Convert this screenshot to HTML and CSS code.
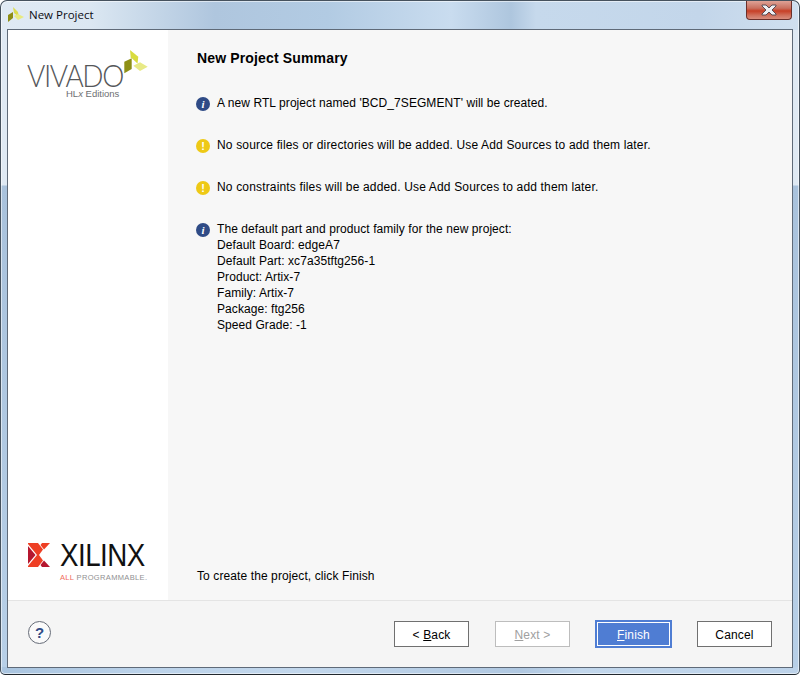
FILE: index.html
```html
<!DOCTYPE html>
<html>

<head>
    <title>New Project</title>
    <link rel="stylesheet" href="styles.css">
</head>

<body>
    <div class="window">
        <div class="titlebar">
            <svg class="title-icon" width="16" height="16" viewBox="0 0 16 16">
                <polygon points="5,0 10,5 11,10 6,6" fill="#dcdc50" />
                <polygon points="0,8 5,5 5,11 0,15" fill="#8e8e14" />
                <polygon points="6,9 10,7 16,10 10,13" fill="#e8ea80" />
            </svg>
            <span class="title-text">New Project</span>
            <div class="close-button">
                <svg width="16" height="12" viewBox="0 0 16 12">
                    <path d="M1 1h4l3 3 3-3h4v1l-4 4 4 4v1h-4l-3-3-3 3H1v-1l4-4-4-4z" fill="#eef0f4" stroke="#5a4a52" stroke-width="1" />
                </svg>
            </div>
        </div>
        <div class="client">
            <div class="main">
                <div class="sidebar">
                    <div class="vivado-logo">
                        <span class="vivado-name">VIVADO</span>
                        <svg class="vivado-mark" width="24" height="24" viewBox="0 0 24 24">
                            <polygon points="6,0 14.3,6.7 13.5,13.5 6.7,7.3" fill="#d9dc3e" />
                            <polygon points="0.3,11.7 7.7,8.3 7.7,19 0.3,23.3" fill="#8e9016" />
                            <polygon points="9.3,15.7 16,12.3 23.7,16.7 16,21" fill="#e8ea86" />
                        </svg>
                        <span class="vivado-sub">HL<i>x</i> Editions</span>
                    </div>
                    <div class="xilinx-logo">
                        <svg class="xilinx-mark" width="22" height="24" viewBox="0 0 22 24">
                            <polygon points="0,0 10,0 15,6.5 11,12 9,12 0,1" fill="#ee3f24" />
                            <polygon points="0,3 7.5,12 0,21" fill="#b5172f" />
                            <polygon points="9,12 11,12 15,17.5 10,24 0,24 0,23" fill="#ee3f24" />
                            <polygon points="22,0 14,0 12.5,2 16,6.5" fill="#ee3f24" />
                            <polygon points="22,24 14,24 12.5,22 16,17.5" fill="#b5172f" />
                        </svg>
                        <div class="xilinx-text">
                            <span class="xilinx-name">XILINX</span>
                            <span class="xilinx-sub"><b>ALL</b> PROGRAMMABLE.</span>
                        </div>
                    </div>
                </div>
                <div class="content">
                    <h2>New Project Summary</h2>
                    <div class="message">
                        <span class="icon info">i</span>
                        <p class="spaced-s">A new RTL project named 'BCD_7SEGMENT' will be created.</p>
                    </div>
                    <div class="message">
                        <span class="icon warn">!</span>
                        <p class="spaced-l">No source files or directories will be added. Use Add Sources to add them later.</p>
                    </div>
                    <div class="message">
                        <span class="icon warn">!</span>
                        <p class="spaced-l">No constraints files will be added. Use Add Sources to add them later.</p>
                    </div>
                    <div class="message">
                        <span class="icon info">i</span>
                        <p class="spaced-s">The default part and product family for the new project:<br>
                            Default Board: edgeA7<br>
                            Default Part: xc7a35tftg256-1<br>
                            Product: Artix-7<br>
                            Family: Artix-7<br>
                            Package: ftg256<br>
                            Speed Grade: -1</p>
                    </div>
                    <p class="hint">To create the project, click Finish</p>
                </div>
            </div>
            <div class="footer">
                <span class="help">?</span>
                <div class="buttons">
                    <button><span>&lt; <u>B</u>ack</span></button>
                    <button disabled><span><u>N</u>ext &gt;</span></button>
                    <button class="primary"><span><u>F</u>inish</span></button>
                    <button><span>Cancel</span></button>
                </div>
            </div>
        </div>
    </div>
</body>

</html>
```

FILE: styles.css
```css
html, body {
    margin: 0;
    padding: 0;
    background-color: #ffffff;
}

body {
    width: 800px;
    height: 675px;
    overflow: hidden;
    font-family: "Liberation Sans", Arial, sans-serif;
    font-size: 12px;
    color: #000;
}

.window {
    box-sizing: border-box;
    width: 800px;
    height: 675px;
    display: flex;
    flex-direction: column;
    padding: 0 6px 6px 6px;
    border: 1px solid #46525e;
    border-bottom-color: #22282e;
    border-radius: 7px 7px 5px 5px;
    background-color: #a9c4df;
    background-image:
        linear-gradient(90deg, #e0eaf4 0, #dbe7f2 90px, #afc6de 214px, #b2cbe3 327px, #c9dcef 450px, #aec6de 510px, #c6d9ec 535px, #c3d6ea 700px, #d0dfef 800px),
        linear-gradient(90deg, #a9c4df 0, #bcd3ea 150px, #c2d7ec 300px, #b0c8e1 520px, #c2d7ec 580px, #bcd2e9 800px),
        linear-gradient(#dfe9f3 0, #dfe9f3 184px, #a9c2dc 185px, #b7cfe7 660px);
    background-size: 100% 29px, 100% 7px, 100% 100%;
    background-position: top, bottom, top;
    background-repeat: no-repeat;
    box-shadow: inset 0 0 0 1px rgba(255, 255, 255, 0.55);
}

.titlebar {
    height: 28px;
    flex: none;
    display: flex;
    align-items: flex-start;
}

.title-icon {
    margin: 6px 0 0 1px;
}

.title-text {
    font-family: "Open Sans", "Noto Sans", sans-serif;
    font-size: 11.5px;
    margin: 6px 0 0 5px;
    color: #0c0c14;
}

.close-button {
    margin-left: auto;
    margin-right: 1px;
    width: 46px;
    height: 19px;
    box-sizing: border-box;
    display: flex;
    align-items: center;
    justify-content: center;
    border: 1px solid #6b2f2a;
    border-top: none;
    border-radius: 0 0 4px 4px;
    background: linear-gradient(#dfa296 0%, #c9705f 40%, #c73f26 55%, #d0705c 80%, #d98d7d 100%);
}

.client {
    flex: 1;
    display: flex;
    flex-direction: column;
    border: 1px solid #5f6a78;
    background-color: #f7f7f7;
    min-height: 0;
}

.main {
    flex: 1;
    display: flex;
    min-height: 0;
}

.sidebar {
    width: 160px;
    flex: none;
    background-color: #ffffff;
    display: flex;
    flex-direction: column;
    justify-content: space-between;
    padding: 20px 0 17px 20px;
    box-sizing: border-box;
}

.vivado-logo {
    position: relative;
    height: 50px;
}

.vivado-name {
    position: absolute;
    left: -1px;
    top: 12px;
    font-family: "Lato", sans-serif;
    font-weight: 300;
    font-size: 31px;
    letter-spacing: -1.5px;
    color: #55575a;
    line-height: 26px;
    transform: scaleX(0.9);
    transform-origin: left;
}

.vivado-mark {
    position: absolute;
    left: 96px;
    top: 0;
}

.vivado-sub {
    position: absolute;
    left: 38px;
    top: 38px;
    font-size: 9.5px;
    color: #6d6f72;
    line-height: 11px;
}

.xilinx-logo {
    display: flex;
    gap: 10px;
}

.xilinx-text {
    display: flex;
    flex-direction: column;
}

.xilinx-name {
    font-size: 32px;
    line-height: 25px;
    letter-spacing: -0.6px;
    color: #111;
    transform: scaleX(0.866);
    transform-origin: left;
}

.xilinx-sub {
    font-size: 7.5px;
    line-height: 10px;
    margin-top: 5px;
    color: #909092;
    letter-spacing: 0.35px;
    white-space: nowrap;
}

.xilinx-sub b {
    font-weight: normal;
    color: #ef6a5a;
}

.content {
    flex: 1;
    display: flex;
    flex-direction: column;
    padding: 19px 20px 16px 29px;
}

h2 {
    margin: 0 0 28px 0;
    font-size: 14px;
    line-height: 18px;
    letter-spacing: 0.15px;
    color: #000;
}

.message {
    display: flex;
    gap: 6px;
    margin-bottom: 26px;
}

.message p {
    margin: 0;
    line-height: 16px;
}

.message .spaced-s {
    letter-spacing: 0.07px;
}

.message .spaced-l {
    letter-spacing: 0.16px;
}

.icon {
    width: 14px;
    height: 14px;
    margin: 2px 1px 0 -1px;
    border-radius: 50%;
    flex: none;
    display: flex;
    align-items: center;
    justify-content: center;
    font-weight: bold;
    font-size: 11px;
    color: #fff;
}

.info {
    background-color: #2f4b86;
    font-family: "Liberation Serif", serif;
    font-style: italic;
}

.warn {
    background-color: #eec916;
}

.hint {
    margin: auto 0 0 0;
    line-height: 16px;
    letter-spacing: 0.1px;
}

.footer {
    height: 67px;
    flex: none;
    box-sizing: border-box;
    border-top: 1px solid #e4e4e4;
    background-color: #f5f5f5;
    display: flex;
    align-items: center;
    justify-content: space-between;
    padding: 0 20px;
}

.help {
    width: 21px;
    height: 21px;
    margin-bottom: 3px;
    border: 1px solid #666c78;
    border-radius: 50%;
    display: flex;
    align-items: center;
    justify-content: center;
    font-weight: bold;
    font-size: 15px;
    color: #2f4b86;
    background-color: #fafafa;
}

.buttons {
    display: flex;
    gap: 26px;
}

button {
    width: 75px;
    height: 26px;
    box-sizing: border-box;
    padding: 1px 0 0 0;
    border: 1px solid #707070;
    background-color: #fff;
    font-family: "Liberation Sans", Arial, sans-serif;
    font-size: 12px;
    letter-spacing: 0.15px;
    color: #000;
}

button:disabled {
    border-color: #bdbdbd;
    color: #a0a0a0;
}

.primary {
    border-color: #4f7dd3;
    background-color: #4f7dd3;
    color: #fff;
    box-shadow: 0 0 0 1px #4f7dd3, inset 0 0 0 1px #fff;
}
```
